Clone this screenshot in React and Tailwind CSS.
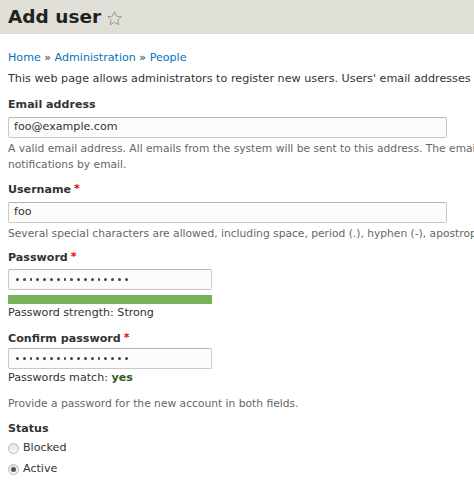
import React from "react";

const font = { fontFamily: '"DejaVu Sans", Verdana, sans-serif' };

function Star() {
  return (
    <svg width="17" height="17" viewBox="0 0 24 24" className="ml-[5px] mt-[2px]">
      <path
        d="M12 2.5l2.9 6.3 6.8.7-5.1 4.6 1.5 6.8L12 17.4l-6.1 3.5 1.5-6.8-5.1-4.6 6.8-.7z"
        fill="none"
        stroke="#9a9a94"
        strokeWidth="1.4"
        strokeLinejoin="round"
      />
    </svg>
  );
}

function Label({ children, required }) {
  return (
    <div className="h-[16px] leading-[16px] text-[11.1px] font-bold text-[#333]">
      {children}
      {required && <span className="ml-[3px] text-[#e00] relative -top-[1px]">*</span>}
    </div>
  );
}

function Input({ value, wide = true, dots }) {
  return (
    <div
      className={`h-[21px] border border-[#c8c8c8] border-t-[#b4b4b4] rounded-[2px] bg-[#fcfcfa] pl-[5px] flex items-center text-[11.1px] text-[#333] ${
        wide ? "w-[439px]" : "w-[204px]"
      }`}
    >
      {dots ? (
        <span className="flex gap-[4px] pl-[2px]">
          {Array.from({ length: 17 }).map((_, i) => (
            <span key={i} className="w-[2.8px] h-[2.8px] rounded-full bg-[#444]" />
          ))}
        </span>
      ) : (
        value
      )}
    </div>
  );
}

function Radio({ checked, label }) {
  return (
    <div className="flex items-center h-[21px] text-[11.1px] text-[#333]">
      <span className="w-[11px] h-[11px] rounded-full border border-[#b9b9b9] bg-gradient-to-b from-[#e2e2e2] to-[#fafafa] flex items-center justify-center mr-[4px]">
        {checked && <span className="w-[5px] h-[5px] rounded-full bg-[#555]" />}
      </span>
      {label}
    </div>
  );
}

export default function App() {
  return (
    <div className="w-[474px] h-[486px] overflow-hidden bg-white relative" style={font}>
      <div className="h-[34px] bg-[#e0e0d8] flex items-center pl-[8px] pt-[1px] border-b border-[#dcdcd4]">
        <h1 className="text-[18.5px] font-bold text-[#222] leading-none">Add user</h1>
        <Star />
      </div>

      <div className="pl-[8px] whitespace-nowrap">
        <div className="mt-[16px] h-[16px] leading-[16px] text-[11.1px] text-[#0074bd]">
          <span>Home</span>
          <span className="text-[#333]"> » </span>
          <span>Administration</span>
          <span className="text-[#333]"> » </span>
          <span>People</span>
        </div>
        <div className="mt-[5px] h-[16px] leading-[16px] text-[11.2px] text-[#333]">
          This web page allows administrators to register new users. Users' email addresses and usernames must be unique.
        </div>

        <div className="mt-[10px]">
          <Label>Email address</Label>
          <div className="mt-[4px]">
            <Input value="foo@example.com" />
          </div>
          <div className="mt-[3px] text-[10.7px] leading-[16px] text-[#666]">
            <div>A valid email address. All emails from the system will be sent to this address. The email address is not made public and will only be used if you wish to receive a new password or wish to receive certain news or</div>
            <div>notifications by email.</div>
          </div>
        </div>

        <div className="mt-[9px]">
          <Label required>Username</Label>
          <div className="mt-[4px]">
            <Input value="foo" />
          </div>
          <div className="mt-[3px] text-[10.7px] leading-[16px] text-[#666]">
            Several special characters are allowed, including space, period (.), hyphen (-), apostrophe ('), underscore (_), and the @ sign.
          </div>
        </div>

        <div className="mt-[8px]">
          <Label required>Password</Label>
          <div className="mt-[3px]">
            <Input wide={false} dots />
          </div>
          <div className="mt-[5px] w-[204px] h-[9px] bg-[#77b259]" />
          <div className="mt-[1px] h-[16px] leading-[16px] text-[11.1px] text-[#333]">Password strength: Strong</div>
        </div>

        <div className="mt-[10px]">
          <Label required>Confirm password</Label>
          <div className="mt-[1px]">
            <Input wide={false} dots />
          </div>
          <div className="mt-[1px] h-[16px] leading-[16px] text-[11.1px] text-[#333]">
            Passwords match: <span className="font-bold text-[#325e1c]">yes</span>
          </div>
        </div>

        <div className="mt-[10px] h-[16px] leading-[16px] text-[10.7px] text-[#666]">
          Provide a password for the new account in both fields.
        </div>

        <div className="mt-[9px]">
          <Label>Status</Label>
          <div className="mt-[1px]">
            <Radio label="Blocked" />
            <Radio checked label="Active" />
          </div>
        </div>
      </div>
    </div>
  );
}
